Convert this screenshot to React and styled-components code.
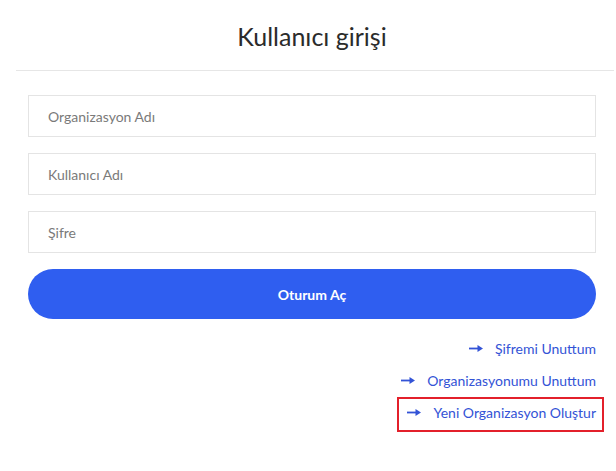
import React from "react";
import styled, { createGlobalStyle } from "styled-components";

const GlobalStyle = createGlobalStyle`
  html, body {
    margin: 0;
    padding: 0;
    background: #ffffff;
  }
  body {
    font-family: Lato, "Open Sans", Arial, sans-serif;
    color: #333;
  }
  * { box-sizing: border-box; }
`;

const Page = styled.div`
  width: 616px;
  min-height: 471px;
  background: #fff;
`;

const Header = styled.div`
  margin: 0 2px 0 16px;
  padding: 21px 6px 18px 0;
  border-bottom: 1px solid #e6e6e6;
  text-align: center;
`;

const Title = styled.h1`
  margin: 0;
  font-size: 25px;
  line-height: 31px;
  font-weight: 400;
  color: #2b2b2b;
`;

const Form = styled.form`
  display: flex;
  flex-direction: column;
  gap: 16px;
  padding: 24px 20px 0 28px;
`;

const Input = styled.input`
  height: 42px;
  width: 100%;
  border: 1px solid #e4e4e4;
  border-radius: 0;
  padding: 0 19px;
  font-family: Lato, sans-serif;
  font-size: 14px;
  color: #555;
  outline: none;
  &::placeholder {
    color: #7a7a7a;
  }
`;

const Submit = styled.button`
  height: 50px;
  width: 100%;
  border: none;
  border-radius: 25px;
  background: #2f5ef0;
  color: #fff;
  font-family: Lato, sans-serif;
  font-weight: 700;
  font-size: 14px;
  cursor: pointer;
`;

const Links = styled.div`
  display: flex;
  flex-direction: column;
  align-items: flex-end;
  padding: 17px 20px 0 0;
`;

const Row = styled.div`
  height: 32px;
`;

const Link = styled.a`
  position: relative;
  display: inline-flex;
  align-items: center;
  gap: 12px;
  font-size: 14px;
  line-height: 20px;
  color: #3353d6;
  text-decoration: none;
  ${(p) =>
    p.$marked &&
    `
    &::after {
      content: "";
      position: absolute;
      top: -6px;
      bottom: -9px;
      left: -10px;
      right: -8px;
      border: 2px solid #e3202b;
    }
  `}
`;

const Arrow = () => (
  <svg width="14" height="7" viewBox="0 0 14 7" aria-hidden="true">
    <rect x="0" y="2.6" width="9" height="1.8" fill="#3353d6" />
    <path d="M8.5 0 L14 3.5 L8.5 7 Z" fill="#3353d6" />
  </svg>
);

export default function App() {
  return (
    <Page>
      <GlobalStyle />
      <Header>
        <Title>Kullanıcı girişi</Title>
      </Header>
      <Form onSubmit={(e) => e.preventDefault()}>
        <Input placeholder="Organizasyon Adı" />
        <Input placeholder="Kullanıcı Adı" />
        <Input type="password" placeholder="Şifre" />
        <Submit type="submit">Oturum Aç</Submit>
      </Form>
      <Links>
        <Row>
          <Link href="#">
            <Arrow />
            Şifremi Unuttum
          </Link>
        </Row>
        <Row>
          <Link href="#">
            <Arrow />
            Organizasyonumu Unuttum
          </Link>
        </Row>
        <Row>
          <Link href="#" $marked>
            <Arrow />
            Yeni Organizasyon Oluştur
          </Link>
        </Row>
      </Links>
    </Page>
  );
}
